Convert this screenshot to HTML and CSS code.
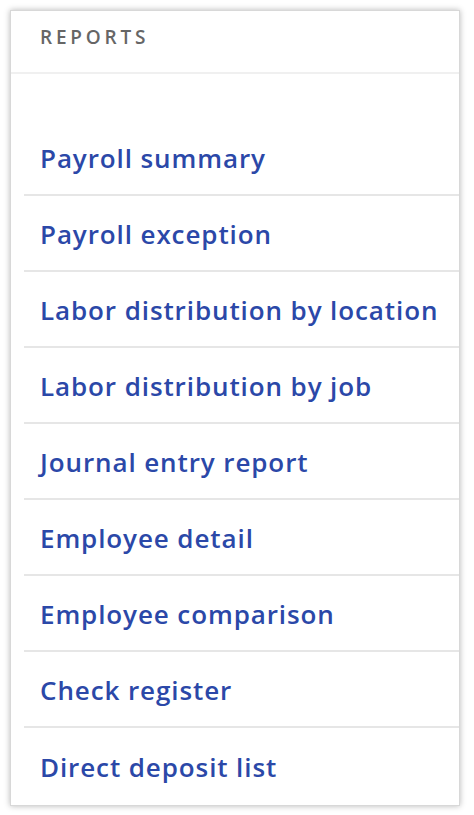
FILE: index.html
```html
<!DOCTYPE html>
<html>
<head>
<meta charset="utf-8">
<link rel="stylesheet" href="styles.css">
</head>
<body>
<div class="card">
  <div class="card-header">REPORTS</div>
  <ul class="report-list">
    <li class="report-item"><a href="#">Payroll summary</a></li>
    <li class="report-item"><a href="#">Payroll exception</a></li>
    <li class="report-item"><a href="#">Labor distribution by location</a></li>
    <li class="report-item"><a href="#">Labor distribution by job</a></li>
    <li class="report-item"><a href="#">Journal entry report</a></li>
    <li class="report-item"><a href="#">Employee detail</a></li>
    <li class="report-item"><a href="#">Employee comparison</a></li>
    <li class="report-item"><a href="#">Check register</a></li>
    <li class="report-item"><a href="#">Direct deposit list</a></li>
  </ul>
</div>
</body>
</html>
```

FILE: styles.css
```css
html, body {
  margin: 0;
  padding: 0;
  background: #ffffff;
}
body {
  padding: 10px 14px 9px 10px;
  font-family: "Open Sans", "Noto Sans", sans-serif;
}
.card {
  background: #fff;
  border: 1px solid #d8d8d8;
  box-shadow: 0 0 6px rgba(0, 0, 0, 0.28);
  height: 796px;
  box-sizing: border-box;
}
.card-header {
  height: 63px;
  box-sizing: border-box;
  padding: 13px 0 0 29px;
  font-size: 19px;
  letter-spacing: 3.8px;
  font-weight: 600;
  color: #666;
  border-bottom: 2px solid #f0f0f0;
}
.report-list {
  list-style: none;
  margin: 0;
  padding: 46px 0 0 13px;
}
.report-item {
  height: 76px;
  box-sizing: border-box;
  display: flex;
  align-items: center;
  padding: 1px 0 0 16px;
  border-bottom: 2px solid #e6e6e6;
}
.report-item:last-child {
  border-bottom: none;
}
.report-item a {
  color: #2b48a8;
  text-decoration: none;
  font-size: 26px;
  font-weight: 600;
  letter-spacing: 0.9px;
}
```
